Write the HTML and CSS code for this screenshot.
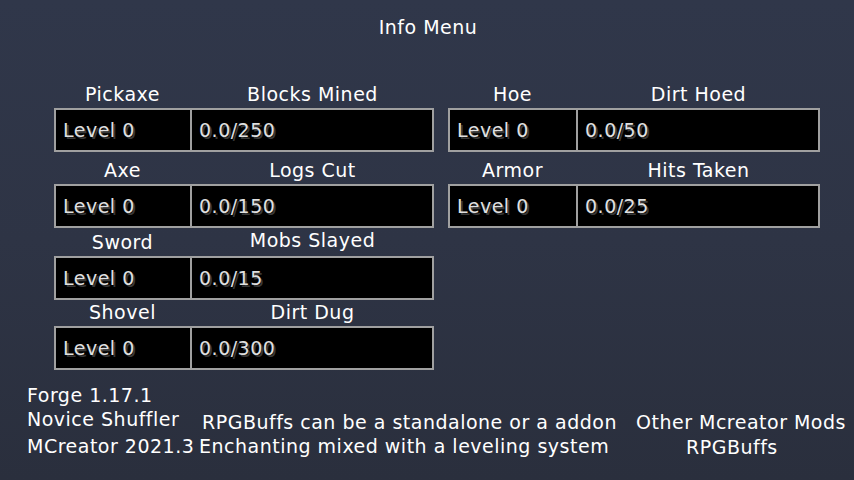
FILE: index.html
```html
<!DOCTYPE html>
<html>
<head>
<meta charset="utf-8">
<title>Info Menu</title>
<link rel="stylesheet" href="styles.css">
</head>
<body>
<div class="screen">
  <h1 class="title">Info Menu</h1>
  <div class="columns">
    <div class="column col-left">
      <section class="stat">
        <div class="labels"><span>Pickaxe</span><span>Blocks Mined</span></div>
        <div class="box"><span class="cell">Level 0</span><span class="cell val">0.0/250</span></div>
      </section>
      <section class="stat stat-2">
        <div class="labels"><span>Axe</span><span>Logs Cut</span></div>
        <div class="box"><span class="cell">Level 0</span><span class="cell val">0.0/150</span></div>
      </section>
      <section class="stat stat-3">
        <div class="labels"><span>Sword</span><span class="raised">Mobs Slayed</span></div>
        <div class="box"><span class="cell">Level 0</span><span class="cell val">0.0/15</span></div>
      </section>
      <section class="stat stat-4">
        <div class="labels"><span>Shovel</span><span>Dirt Dug</span></div>
        <div class="box"><span class="cell">Level 0</span><span class="cell val">0.0/300</span></div>
      </section>
    </div>
    <div class="column col-right">
      <section class="stat">
        <div class="labels"><span>Hoe</span><span>Dirt Hoed</span></div>
        <div class="box"><span class="cell">Level 0</span><span class="cell val">0.0/50</span></div>
      </section>
      <section class="stat stat-2">
        <div class="labels"><span>Armor</span><span>Hits Taken</span></div>
        <div class="box"><span class="cell">Level 0</span><span class="cell val">0.0/25</span></div>
      </section>
    </div>
  </div>
  <footer class="footer">
    <div class="row row-1"><span>Forge 1.17.1</span></div>
    <div class="row row-2"><span>Novice Shuffler</span><span class="drop3">RPGBuffs can be a standalone or a addon</span><span class="drop3">Other Mcreator Mods</span></div>
    <div class="row row-3"><span>MCreator 2021.3</span><span>Enchanting mixed with a leveling system</span><span class="drop1">RPGBuffs</span></div>
  </footer>
</div>
</body>
</html>
```
FILE: styles.css
```css
* { box-sizing: border-box; }
html, body { margin: 0; padding: 0; }
body {
  width: 854px;
  height: 480px;
  overflow: hidden;
  background: linear-gradient(180deg, #30374a 0%, #2e3445 50%, #2a2f3d 100%);
  font-family: "DejaVu Sans", "Noto Sans", sans-serif;
  font-size: 19px;
  letter-spacing: 0.5px;
  line-height: 16px;
  color: #ffffff;
}
.screen {
  padding-top: 19px;
  display: flex;
  flex-direction: column;
}
.title {
  margin: 0;
  font-size: 19px;
  font-weight: normal;
  line-height: 16px;
  height: 16px;
  text-align: center;
  padding-left: 2px;
}
.columns {
  margin-top: 51px;
  padding-left: 54px;
  display: flex;
  gap: 14px;
  align-items: flex-start;
  height: 284px;
}
.column {
  display: flex;
  flex-direction: column;
}
.col-left { width: 380px; --lvl: 134px; }
.col-right { width: 372px; --lvl: 126px; }
.stat { display: flex; flex-direction: column; }
.stat-2 { margin-top: 10px; }
.stat-3 { margin-top: 6px; }
.stat-4 { margin-top: 4px; }
.labels {
  display: grid;
  grid-template-columns: calc(var(--lvl) + 3px) 1fr;
  height: 16px;
  margin-bottom: 6px;
  white-space: nowrap;
}
.labels span { text-align: center; }
.raised { margin-top: -2px; }
.box {
  display: grid;
  grid-template-columns: var(--lvl) 1fr;
  height: 44px;
  border: 2px solid #a0a0a0;
  background: #000000;
}
.cell {
  display: flex;
  align-items: center;
  padding: 0 7px;
  color: #e0e0e0;
  text-shadow: 2px 2px 0 #383838;
  white-space: nowrap;
}
.val { border-left: 2px solid #a0a0a0; }
.footer {
  margin-top: 17px;
  padding-left: 27px;
  display: flex;
  flex-direction: column;
  white-space: nowrap;
}
.row { display: grid; height: 16px; align-items: start; }
.row-1 { grid-template-columns: auto; }
.row-2 { margin-top: 8px; grid-template-columns: 175px 434px auto; }
.row-3 { margin-top: 11px; grid-template-columns: 172px 487px auto; }
.drop3 { margin-top: 3px; }
.drop1 { margin-top: 1px; }
```
